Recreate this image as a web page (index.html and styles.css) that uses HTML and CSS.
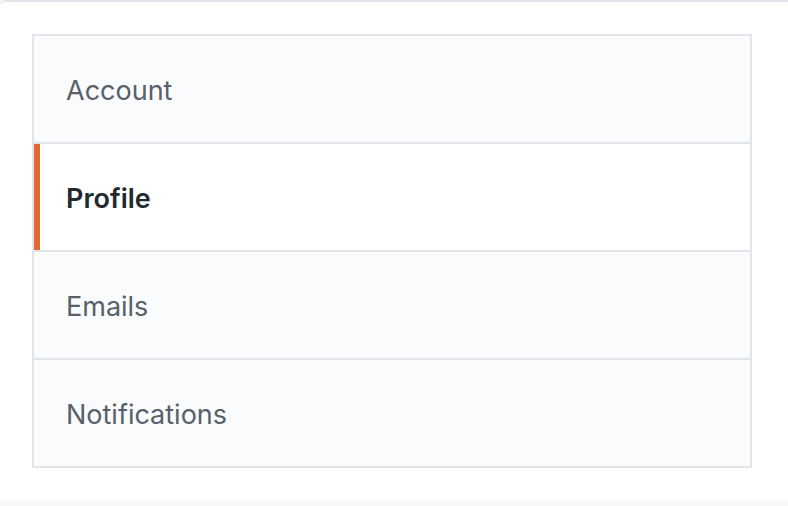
FILE: index.html
```html
<!DOCTYPE html>
<html>
<head>
<meta charset="utf-8">
<link rel="stylesheet" href="styles.css">
</head>
<body>
<div class="card">
  <nav class="menu">
    <a class="menu-item">Account</a>
    <a class="menu-item selected">Profile</a>
    <a class="menu-item">Emails</a>
    <a class="menu-item">Notifications</a>
  </nav>
</div>
</body>
</html>
```
FILE: styles.css
```css
html, body {
  margin: 0;
  padding: 0;
  background: #f6f8fa;
  font-family: Inter, "Liberation Sans", sans-serif;
}
.card {
  background: #ffffff;
  border-top: 2px solid #e1e4e8;
  border-top-left-radius: 6px;
  padding: 32px 0 32px 32px;
}
.menu {
  width: 716px;
  display: flex;
  flex-direction: column;
  border: 2px solid #e1e4e8;
  background: #fafbfc;
}
.menu-item {
  height: 108px;
  box-sizing: border-box;
  display: flex;
  align-items: center;
  padding: 2px 0 0 32px;
  font-size: 27px;
  color: #586069;
  border-top: 2px solid #e1e4e8;
}
.menu-item:first-child {
  height: 106px;
  border-top: none;
}
.menu-item.selected {
  background: #ffffff;
  color: #24292e;
  font-weight: 600;
  box-shadow: inset 6px 0 0 #df6a2e;
}
```
